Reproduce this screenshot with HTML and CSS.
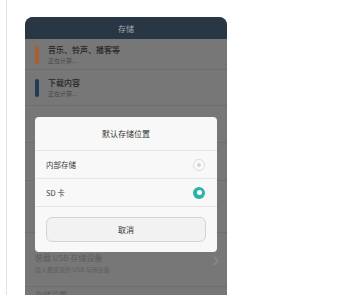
FILE: index.html
```html
<!DOCTYPE html>
<html>
<head>
<meta charset="utf-8">
<link rel="stylesheet" href="styles.css">
</head>
<body>
<div class="page">
  <div class="rule"></div>
  <div class="phone">
    <div class="header">存储</div>
    <div class="row row-first">
      <span class="bar bar-orange"></span>
      <div class="texts">
        <div class="title">音乐、铃声、播客等</div>
        <div class="sub">正在计算...</div>
      </div>
    </div>
    <div class="row row-second">
      <span class="bar bar-blue"></span>
      <div class="texts">
        <div class="title">下载内容</div>
        <div class="sub">正在计算...</div>
      </div>
    </div>
    <div class="row row-plain h37"></div>
    <div class="row row-plain h38"></div>
    <div class="row row-plain h52"></div>
    <div class="row row-usb">
      <div class="texts">
        <div class="title dim">装载 USB 存储设备</div>
        <div class="sub dim">插入要装载的 USB 存储设备</div>
      </div>
      <svg class="chev" width="6" height="10" viewBox="0 0 6 10"><path d="M1 1 L5 5 L1 9" fill="none" stroke="#8c8c8c" stroke-width="1.2"/></svg>
    </div>
    <div class="row row-section">
      <div class="title dim">存储设置</div>
    </div>

    <div class="dialog">
      <div class="dlg-title">默认存储位置</div>
      <div class="opt">
        <span>内部存储</span>
        <span class="radio"></span>
      </div>
      <div class="opt">
        <span>SD 卡</span>
        <span class="radio on"></span>
      </div>
      <div class="btn-area">
        <div class="btn">取消</div>
      </div>
    </div>
  </div>
</div>
</body>
</html>
```
FILE: styles.css
```css
* { box-sizing: border-box; }
html, body {
  margin: 0;
  padding: 0;
  background: #ffffff;
  font-family: "Noto Sans CJK SC", "Noto Sans", sans-serif;
}
.page {
  display: flex;
  height: 295px;
  overflow: hidden;
}
.rule {
  width: 1px;
  margin-left: 6px;
  background: #e2e2e2;
  flex: none;
}
.phone {
  position: relative;
  margin-left: 18px;
  margin-top: 17px;
  width: 202px;
  height: 300px;
  flex: none;
  background: #777777;
  border-radius: 8px 8px 0 0;
  overflow: hidden;
}
.header {
  height: 22px;
  background: #283743;
  color: #a3abb2;
  font-size: 8px;
  line-height: 22px;
  text-align: center;
  padding-top: 1px;
}
.row {
  display: flex;
  align-items: center;
  border-bottom: 1px solid #6d6d6d;
}
.row-first { height: 31px; padding-top: 2px; }
.row-second { height: 36px; padding-top: 1px; }
.h37 { height: 37px; }
.h38 { height: 38px; }
.h52 { height: 52px; }
.row-usb { height: 54px; padding-left: 10px; padding-right: 8px; padding-top: 6px; justify-content: space-between; }
.row-section { height: 20px; padding-left: 10px; align-items: flex-start; padding-top: 2px; border-bottom: none; }
.bar {
  width: 4px;
  height: 18px;
  border-radius: 2px;
  margin-left: 10px;
  margin-right: 9px;
  flex: none;
}
.bar-orange { background: #a9602c; }
.bar-blue { background: #243956; }
.texts { display: flex; flex-direction: column; }
.title {
  font-size: 8px;
  line-height: 12px;
  color: #262626;
  font-weight: 500;
}
.sub {
  font-size: 6px;
  line-height: 10px;
  color: #454545;
}
.row-usb .title { line-height: 13px; }
.row-usb .sub { line-height: 11px; }
.title.dim { color: #5c5c5c; font-weight: 400; }
.sub.dim { color: #606060; }
.chev { flex: none; margin-top: -4px; }

.dialog {
  position: absolute;
  left: 10px;
  top: 100px;
  width: 182px;
  height: 135px;
  background: #f8f8f8;
  border-radius: 4px;
  display: flex;
  flex-direction: column;
}
.dlg-title {
  height: 34px;
  line-height: 34px;
  text-align: center;
  font-size: 8px;
  color: #333333;
  border-bottom: 1px solid #e6e6e6;
}
.opt {
  height: 28px;
  display: flex;
  align-items: center;
  justify-content: space-between;
  padding: 0 12px 0 11px;
  font-size: 7.5px;
  color: #3a3a3a;
  border-bottom: 1px solid #e6e6e6;
}
.radio {
  width: 12px;
  height: 12px;
  border-radius: 50%;
  border: 1px solid #dcdcdc;
  display: flex;
  align-items: center;
  justify-content: center;
  background: #fafafa;
}
.radio::after {
  content: "";
  width: 4px;
  height: 4px;
  border-radius: 50%;
  background: #d4d4d4;
}
.radio.on {
  border: none;
  background: #2bb3a8;
}
.radio.on::after {
  width: 5px;
  height: 5px;
  background: #ffffff;
}
.btn-area {
  flex: 1;
  padding: 10px 11px 10px 11px;
}
.btn {
  height: 25px;
  border: 1px solid #d3d3d3;
  border-radius: 6px;
  background: #f2f2f2;
  font-size: 8px;
  color: #333333;
  text-align: center;
  line-height: 23px;
}
```
